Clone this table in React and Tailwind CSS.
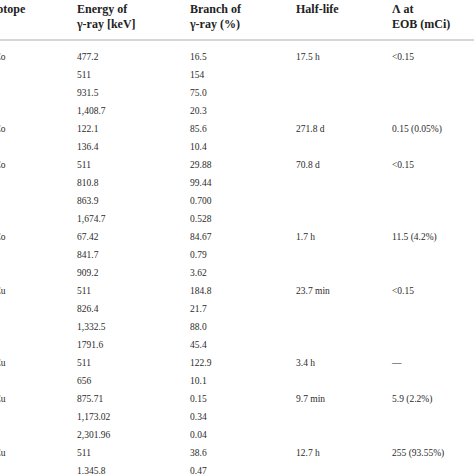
import React from "react";

const groups = [
  { m: "55", el: "Co", e: ["477.2", "511", "931.5", "1,408.7"], b: ["16.5", "154", "75.0", "20.3"], h: "17.5 h", a: "<0.15" },
  { m: "57", el: "Co", e: ["122.1", "136.4"], b: ["85.6", "10.4"], h: "271.8 d", a: "0.15 (0.05%)" },
  { m: "58", el: "Co", e: ["511", "810.8", "863.9", "1,674.7"], b: ["29.88", "99.44", "0.700", "0.528"], h: "70.8 d", a: "<0.15" },
  { m: "61", el: "Co", e: ["67.42", "841.7", "909.2"], b: ["84.67", "0.79", "3.62"], h: "1.7 h", a: "11.5 (4.2%)" },
  { m: "60", el: "Cu", e: ["511", "826.4", "1,332.5", "1791.6"], b: ["184.8", "21.7", "88.0", "45.4"], h: "23.7 min", a: "<0.15" },
  { m: "61", el: "Cu", e: ["511", "656"], b: ["122.9", "10.1"], h: "3.4 h", a: "—" },
  { m: "62", el: "Cu", e: ["875.71", "1,173.02", "2,301.96"], b: ["0.15", "0.34", "0.04"], h: "9.7 min", a: "5.9 (2.2%)" },
  { m: "64", el: "Cu", e: ["511", "1,345.8"], b: ["38.6", "0.47"], h: "12.7 h", a: "255 (93.55%)" },
];

export default function App() {
  const rows = [];
  groups.forEach((g, gi) => {
    g.e.forEach((en, i) => {
      rows.push(
        <div key={gi + "-" + i} className="flex h-[18px] items-center leading-none">
          <div className="w-[89px] shrink-0">
            {i === 0 ? (
              <span>
                <sup className="text-[6.5px]">{g.m}</sup>
                {g.el}
              </span>
            ) : null}
          </div>
          <div className="w-[113px] shrink-0">{en}</div>
          <div className="w-[106px] shrink-0">{g.b[i]}</div>
          <div className="w-[96px] shrink-0">{i === 0 ? g.h : ""}</div>
          <div className="w-[100px] shrink-0">{i === 0 ? g.a : ""}</div>
        </div>
      );
    });
  });

  return (
    <div
      className="w-[474px] h-[474px] overflow-hidden bg-white text-[#2b2b2b]"
      style={{ fontFamily: '"Liberation Serif", "DejaVu Serif", serif' }}
    >
      <div className="ml-[-12px] w-[520px]">
        <div className="flex h-[39px] pt-[1.5px] text-[12px] font-bold leading-[15px] text-[#222]">
          <div className="w-[89px] shrink-0">Isotope</div>
          <div className="w-[113px] shrink-0">
            Energy of
            <br />
            γ-ray [keV]
          </div>
          <div className="w-[106px] shrink-0">
            Branch of
            <br />
            γ-ray (%)
          </div>
          <div className="w-[96px] shrink-0">Half-life</div>
          <div className="w-[100px] shrink-0">
            Λ at
            <br />
            EOB (mCi)
          </div>
        </div>
        <div className="h-[2px] bg-[#d6d6d6]"></div>
        <div className="pt-[7.5px] text-[9.5px]">{rows}</div>
      </div>
    </div>
  );
}
